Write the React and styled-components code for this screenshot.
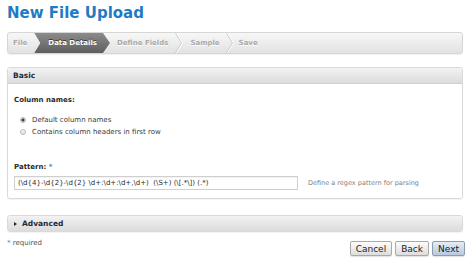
import styled, { createGlobalStyle, css } from 'styled-components'

const Global = createGlobalStyle`
  html, body {
    margin: 0;
    padding: 0;
    background: #fff;
  }
  body {
    font-family: "DejaVu Sans", Verdana, sans-serif;
    font-size: 7px;
    color: #333;
  }
`

const Page = styled.div`
  width: 474px;
  height: 267px;
  box-sizing: border-box;
  padding: 3px 11px 0 7px;
  overflow: hidden;
`

const Title = styled.h1`
  margin: 0;
  font-size: 15px;
  line-height: 20px;
  font-weight: bold;
  color: #1f7bc4;
`

const Steps = styled.div`
  display: flex;
  align-items: stretch;
  height: 20px;
  margin-top: 9px;
  border: 1px solid #d6d6d6;
  border-radius: 3px;
  background: linear-gradient(#f7f7f7, #e2e2e2);
  overflow: hidden;
  box-shadow: 0 1px 1px rgba(0, 0, 0, 0.06);
`

const Step = styled.div`
  display: flex;
  align-items: center;
  font-weight: bold;
  font-size: 7px;
  color: #a9a9a9;
  padding: 0 ${(p) => p.$pr || 0}px 0 ${(p) => p.$pl || 0}px;
  text-shadow: 0 1px 0 #fff;
  ${(p) =>
    p.$active &&
    css`
      color: #fff;
      text-shadow: 0 -1px 0 #3c3c3c;
      background: linear-gradient(#8c8c8c, #5e5e5e);
      clip-path: polygon(0 0, calc(100% - 7px) 0, 100% 50%, calc(100% - 7px) 100%, 0 100%, 6px 50%);
    `}
`

const Chevron = styled.svg`
  width: 8px;
  height: 20px;
  flex: none;
`

const Sep = () => (
  <Chevron viewBox="0 0 8 20">
    <polyline points="0.5,0 6.5,10 0.5,20" fill="none" stroke="#c8c8c8" strokeWidth="1" />
    <polyline points="1.5,0 7.5,10 1.5,20" fill="none" stroke="#fbfbfb" strokeWidth="1" />
  </Chevron>
)

const Panel = styled.div`
  margin-top: ${(p) => p.$mt}px;
  border: 1px solid #dadada;
  border-radius: 3px;
  box-shadow: 0 1px 1px rgba(0, 0, 0, 0.05);
`

const PanelHead = styled.div`
  display: flex;
  align-items: center;
  height: 15px;
  padding: 0 5px;
  font-weight: bold;
  font-size: 7.5px;
  color: #1c2a3c;
  background: linear-gradient(#f2f2f2, #dcdcdc);
  border-bottom: ${(p) => (p.$open ? '1px solid #cfcfcf' : 'none')};
  border-radius: 3px 3px 0 0;
`

const Tri = styled.span`
  width: 0;
  height: 0;
  border-left: 3px solid #1c2a3c;
  border-top: 2.5px solid transparent;
  border-bottom: 2.5px solid transparent;
  margin: 0 5px 0 1px;
`

const PanelBody = styled.div`
  padding: 11px 6px 8px 6px;
  background: #fff;
  border-radius: 0 0 3px 3px;
`

const Label = styled.div`
  font-weight: bold;
  font-size: 7px;
  color: #2a2a2a;
  line-height: 10px;
  margin-top: ${(p) => p.$mt || 0}px;
`

const Star = styled.span`
  color: #3a8ed0;
`

const Radios = styled.div`
  display: flex;
  flex-direction: column;
  gap: 2px;
  margin: 10px 0 0 6px;
`

const RadioRow = styled.label`
  display: flex;
  align-items: center;
  gap: 6px;
  line-height: 10px;
  color: #3a3a3a;
`

const Dot = styled.span`
  width: 6px;
  height: 6px;
  border-radius: 50%;
  box-sizing: border-box;
  border: 1px solid #bcbcbc;
  background: ${(p) =>
    p.$on
      ? 'radial-gradient(circle, #3b3b3b 0 1.2px, #d8d8d8 1.8px, #f0f0f0)'
      : 'linear-gradient(#fafafa, #dedede)'};
`

const PatternRow = styled.div`
  display: flex;
  align-items: center;
  gap: 10px;
  margin-top: 4px;
`

const Input = styled.div`
  width: 284px;
  height: 14px;
  box-sizing: border-box;
  border: 1px solid #cfcfcf;
  padding: 0 3px;
  display: flex;
  align-items: center;
  font-size: 7px;
  color: #2a2a2a;
  white-space: pre;
  box-shadow: inset 0 1px 1px rgba(0, 0, 0, 0.06);
`

const Help = styled.div`
  font-size: 6.5px;
  color: #808080;
`

const Footer = styled.div`
  display: flex;
  justify-content: space-between;
  align-items: flex-start;
  margin-top: 5px;
`

const Required = styled.div`
  font-size: 7px;
  color: #555;
  padding-top: 2px;
`

const Buttons = styled.div`
  display: flex;
  gap: 3px;
  margin: 4px -2px 0 0;
`

const Button = styled.button`
  font-family: "DejaVu Sans", Verdana, sans-serif;
  font-size: 9px;
  height: 15px;
  padding: 0 5px;
  border: 1px solid ${(p) => (p.$primary ? '#8e9cb0' : '#a9a9a9')};
  border-radius: 2px;
  color: #222;
  background: ${(p) =>
    p.$primary ? 'linear-gradient(#e5edf7, #b9c8dc)' : 'linear-gradient(#fdfdfd, #dcdcdc)'};
  box-shadow: 0 1px 1px rgba(0, 0, 0, 0.12);
`

export default function App() {
  return (
    <Page>
      <Global />
      <Title>New File Upload</Title>
      <Steps>
        <Step $pl={5} $pr={7}>File</Step>
        <Step $active $pl={14} $pr={13}>Data Details</Step>
        <Step $pl={7} $pr={7}>Define Fields</Step>
        <Sep />
        <Step $pl={7} $pr={6}>Sample</Step>
        <Sep />
        <Step $pl={5}>Save</Step>
      </Steps>

      <Panel $mt={13}>
        <PanelHead $open>Basic</PanelHead>
        <PanelBody>
          <Label>Column names:</Label>
          <Radios>
            <RadioRow>
              <Dot $on />
              Default column names
            </RadioRow>
            <RadioRow>
              <Dot />
              Contains column headers in first row
            </RadioRow>
          </Radios>
          <Label $mt={25}>
            Pattern: <Star>*</Star>
          </Label>
          <PatternRow>
            <Input>{'(\\d{4}-\\d{2}-\\d{2} \\d+:\\d+:\\d+,\\d+)  (\\S+) (\\[.*\\]) (.*)'}</Input>
            <Help>Define a regex pattern for parsing</Help>
          </PatternRow>
        </PanelBody>
      </Panel>

      <Panel $mt={16}>
        <PanelHead>
          <Tri />
          Advanced
        </PanelHead>
      </Panel>

      <Footer>
        <Required>
          <Star>*</Star> required
        </Required>
        <Buttons>
          <Button>Cancel</Button>
          <Button>Back</Button>
          <Button $primary>Next</Button>
        </Buttons>
      </Footer>
    </Page>
  )
}
